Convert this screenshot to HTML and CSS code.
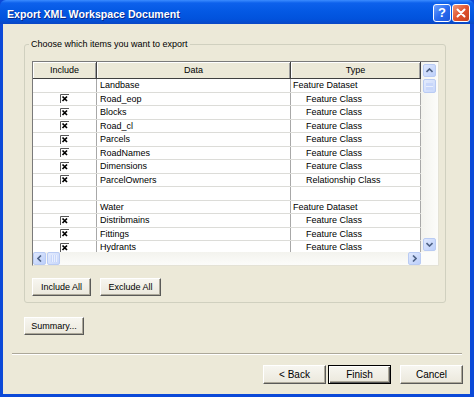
FILE: index.html
```html
<!DOCTYPE html>
<html lang="en">
<head>
  <meta charset="UTF-8">
  <title>Export XML Workspace Document</title>
  <link rel="stylesheet" href="styles.css">
</head>
<body>

<div class="dialog">
  <div class="titlebar">
    <span class="title">Export XML Workspace Document</span>
    <div class="caption-buttons">
      <span class="cap help">?</span>
      <span class="cap close">
        <svg width="10" height="10" viewBox="0 0 10 10"><path d="M1.5 1.5l7 7M8.5 1.5l-7 7" stroke="#fff" stroke-width="2" stroke-linecap="round"/></svg>
      </span>
    </div>
  </div>

  <div class="content">
    <fieldset class="group">
      <legend>Choose which items you want to export</legend>

      <div class="grid">
        <div class="list">
          <div class="row head">
            <div class="cell">Include</div>
            <div class="cell">Data</div>
            <div class="cell">Type</div>
          </div>
          <div class="rows">
            <div class="row"><div class="cell"></div><div class="cell">Landbase</div><div class="cell">Feature Dataset</div></div>
            <div class="row"><div class="cell"><svg class="check" width="9" height="9" viewBox="0 0 9 9"><path d="M0.5 9V0.5H9" stroke="#555" fill="none"/><path d="M2.5 2.5l4.5 4.5M7 2.5l-4.5 4.5" stroke="#000" stroke-width="1.7"/></svg></div><div class="cell">Road_eop</div><div class="cell sub">Feature Class</div></div>
            <div class="row"><div class="cell"><svg class="check" width="9" height="9" viewBox="0 0 9 9"><path d="M0.5 9V0.5H9" stroke="#555" fill="none"/><path d="M2.5 2.5l4.5 4.5M7 2.5l-4.5 4.5" stroke="#000" stroke-width="1.7"/></svg></div><div class="cell">Blocks</div><div class="cell sub">Feature Class</div></div>
            <div class="row"><div class="cell"><svg class="check" width="9" height="9" viewBox="0 0 9 9"><path d="M0.5 9V0.5H9" stroke="#555" fill="none"/><path d="M2.5 2.5l4.5 4.5M7 2.5l-4.5 4.5" stroke="#000" stroke-width="1.7"/></svg></div><div class="cell">Road_cl</div><div class="cell sub">Feature Class</div></div>
            <div class="row"><div class="cell"><svg class="check" width="9" height="9" viewBox="0 0 9 9"><path d="M0.5 9V0.5H9" stroke="#555" fill="none"/><path d="M2.5 2.5l4.5 4.5M7 2.5l-4.5 4.5" stroke="#000" stroke-width="1.7"/></svg></div><div class="cell">Parcels</div><div class="cell sub">Feature Class</div></div>
            <div class="row"><div class="cell"><svg class="check" width="9" height="9" viewBox="0 0 9 9"><path d="M0.5 9V0.5H9" stroke="#555" fill="none"/><path d="M2.5 2.5l4.5 4.5M7 2.5l-4.5 4.5" stroke="#000" stroke-width="1.7"/></svg></div><div class="cell">RoadNames</div><div class="cell sub">Feature Class</div></div>
            <div class="row"><div class="cell"><svg class="check" width="9" height="9" viewBox="0 0 9 9"><path d="M0.5 9V0.5H9" stroke="#555" fill="none"/><path d="M2.5 2.5l4.5 4.5M7 2.5l-4.5 4.5" stroke="#000" stroke-width="1.7"/></svg></div><div class="cell">Dimensions</div><div class="cell sub">Feature Class</div></div>
            <div class="row"><div class="cell"><svg class="check" width="9" height="9" viewBox="0 0 9 9"><path d="M0.5 9V0.5H9" stroke="#555" fill="none"/><path d="M2.5 2.5l4.5 4.5M7 2.5l-4.5 4.5" stroke="#000" stroke-width="1.7"/></svg></div><div class="cell">ParcelOwners</div><div class="cell sub">Relationship Class</div></div>
            <div class="row"><div class="cell"></div><div class="cell"></div><div class="cell"></div></div>
            <div class="row"><div class="cell"></div><div class="cell">Water</div><div class="cell">Feature Dataset</div></div>
            <div class="row"><div class="cell"><svg class="check" width="9" height="9" viewBox="0 0 9 9"><path d="M0.5 9V0.5H9" stroke="#555" fill="none"/><path d="M2.5 2.5l4.5 4.5M7 2.5l-4.5 4.5" stroke="#000" stroke-width="1.7"/></svg></div><div class="cell">Distribmains</div><div class="cell sub">Feature Class</div></div>
            <div class="row"><div class="cell"><svg class="check" width="9" height="9" viewBox="0 0 9 9"><path d="M0.5 9V0.5H9" stroke="#555" fill="none"/><path d="M2.5 2.5l4.5 4.5M7 2.5l-4.5 4.5" stroke="#000" stroke-width="1.7"/></svg></div><div class="cell">Fittings</div><div class="cell sub">Feature Class</div></div>
            <div class="row"><div class="cell"><svg class="check" width="9" height="9" viewBox="0 0 9 9"><path d="M0.5 9V0.5H9" stroke="#555" fill="none"/><path d="M2.5 2.5l4.5 4.5M7 2.5l-4.5 4.5" stroke="#000" stroke-width="1.7"/></svg></div><div class="cell">Hydrants</div><div class="cell sub">Feature Class</div></div>
          </div>
        </div>

        <!-- vertical scrollbar -->
        <div class="vscroll">
          <span class="sbtn"><svg width="7" height="5" viewBox="0 0 7 5"><path d="M0.5 4L3.5 1L6.5 4" stroke="#4d6185" stroke-width="1.6" fill="none"/></svg></span>
          <span class="thumb v"></span>
          <span class="track"></span>
          <span class="sbtn"><svg width="7" height="5" viewBox="0 0 7 5"><path d="M0.5 1L3.5 4L6.5 1" stroke="#4d6185" stroke-width="1.6" fill="none"/></svg></span>
        </div>

        <!-- horizontal scrollbar -->
        <div class="hscroll">
          <span class="sbtn"><svg width="5" height="7" viewBox="0 0 5 7"><path d="M4 0.5L1 3.5L4 6.5" stroke="#4d6185" stroke-width="1.6" fill="none"/></svg></span>
          <span class="thumb h"></span>
          <span class="track"></span>
          <span class="sbtn"><svg width="5" height="7" viewBox="0 0 5 7"><path d="M1 0.5L4 3.5L1 6.5" stroke="#4d6185" stroke-width="1.6" fill="none"/></svg></span>
        </div>
        <div class="corner"></div>
      </div>

      <div class="group-buttons">
        <button class="btn">Include All</button>
        <button class="btn wide">Exclude All</button>
      </div>
    </fieldset>

    <button class="btn summary">Summary...</button>

    <div class="separator"></div>

    <div class="footer">
      <button class="btn nav">&lt; Back</button>
      <button class="btn nav default">Finish</button>
      <button class="btn nav cancel">Cancel</button>
    </div>
  </div>
</div>

</body>
</html>
```

FILE: styles.css
```css
body {
  margin: 0;
  font-family: "Liberation Sans", Arial, sans-serif;
  font-size: 9px;
  color: #000;
  background: #0b49d8;
}

.dialog {
  width: 474px;
  height: 397px;
  box-sizing: border-box;
  background: #0b49d8;
  display: flex;
  flex-direction: column;
  padding: 0 4px 3px 3px;
}

/* title bar */
.titlebar {
  height: 24px;
  margin: 0 -4px 0 -3px;
  padding: 0 4px 0 7px;
  display: flex;
  align-items: center;
  justify-content: space-between;
  background: linear-gradient(#3b8cff 0, #0d61ec 3px, #0459e4 45%, #0152dc 80%, #0a47c4 100%);
  border-radius: 6px 6px 0 0;
}

.title {
  color: #fff;
  font-weight: bold;
  font-size: 10.6px;
  padding-top: 3px;
  text-shadow: 1px 1px 0 #0a2a8a;
}

.caption-buttons {
  display: flex;
  gap: 1px;
  padding-top: 1px;
}

.cap {
  width: 16px;
  height: 16px;
  border: 1px solid #fff;
  border-radius: 3px;
  display: flex;
  align-items: center;
  justify-content: center;
  color: #fff;
  font-weight: bold;
  font-size: 13px;
}

.help {
  background: linear-gradient(135deg, #6fa2ff, #2a6cf0 50%, #1d55d8);
}

.close {
  background: linear-gradient(135deg, #f09a7a, #e0532e 50%, #c8401c);
}

/* dialog body */
.content {
  flex: 1;
  background: #ece9d8;
  display: flex;
  flex-direction: column;
}

.group {
  margin: 14px 24px 0 21px;
  padding: 11px 6px 6px 7px;
  border: 1px solid #d0d0bf;
  border-radius: 3px;
}

.group legend {
  margin-left: -3px;
  padding: 0 2px;
  line-height: 12px;
}

/* list view */
.grid {
  width: 407px;
  height: 205px;
  box-sizing: border-box;
  border: 1px solid;
  border-color: #7a7a7a #e4e2d6 #e4e2d6 #7a7a7a;
  background: #fff;
  display: grid;
  grid-template-columns: 388px 17px;
  grid-template-rows: 190px 13px;
}

.list {
  overflow: hidden;
}

.row {
  display: grid;
  grid-template-columns: 64px 194px 130px;
  height: 13.5px;
  box-sizing: border-box;
  border-bottom: 1px solid #dcdcd8;
}

.cell {
  border-right: 1px solid #a8a8a8;
  padding-left: 2px;
  line-height: 12.5px;
  white-space: nowrap;
  overflow: hidden;
}

.row .cell:first-child {
  display: flex;
  align-items: center;
  justify-content: center;
  padding-left: 0;
}

.row .cell:nth-child(2) {
  padding-left: 3px;
}

.cell.sub {
  padding-left: 15px;
}

.head {
  height: 17px;
  border-bottom: 1px solid #404040;
  background: #ece9d8;
}

.head .cell,
.head .cell:nth-child(2) {
  padding-left: 0;
  text-align: center;
  line-height: 16px;
  border-right: 1px solid #404040;
  box-shadow: inset 1px 1px 0 #fff, inset -1px 0 0 #a0a0a0;
}

.check {
  display: block;
}

/* scrollbars */
.vscroll,
.hscroll {
  background: linear-gradient(90deg, #f3f3ee, #fcfcfa);
  display: flex;
  gap: 1px;
}

.vscroll {
  flex-direction: column;
  align-items: center;
  padding: 2px 0 1px;
}

.hscroll {
  align-items: center;
  padding-left: 0;
  background: linear-gradient(#f3f3ee, #fcfcfa);
}

.track {
  flex: 1;
}

.sbtn {
  width: 13px;
  height: 13px;
  box-sizing: border-box;
  border: 1px solid #b9cbf3;
  border-radius: 2px;
  background: linear-gradient(135deg, #dfe8fd, #bccffa);
  display: flex;
  align-items: center;
  justify-content: center;
}

.thumb {
  box-sizing: border-box;
  border: 1px solid #b9cbf3;
  border-radius: 2px;
  background: linear-gradient(135deg, #e3ebfd, #c8d7fb);
}

.thumb.v {
  width: 13px;
  height: 14px;
  margin-top: 1px;
  background: repeating-linear-gradient(#c8d7fb 0 3px, #e9effd 3px 4px) center / 7px 7px no-repeat,
    linear-gradient(135deg, #e3ebfd, #c8d7fb);
}

.thumb.h {
  width: 13px;
  height: 13px;
  background: repeating-linear-gradient(90deg, #c8d7fb 0 1px, #e9effd 1px 2px) center / 6px 7px no-repeat,
    linear-gradient(135deg, #e3ebfd, #c8d7fb);
}

.corner {
  background: #fcfcfa;
}

/* buttons */
.btn {
  font-family: "Liberation Sans", Arial, sans-serif;
  font-size: 9px;
  color: #000;
  height: 18px;
  padding: 0;
  box-sizing: border-box;
  border: 1px solid;
  border-color: #fff #5a5a58 #5a5a58 #fff;
  box-shadow: inset -1px -1px 0 #aca899;
  background: linear-gradient(#f7f6f0, #ebe8dc);
}

.group-buttons {
  display: flex;
  gap: 9px;
  margin-top: 12px;
}

.group-buttons .btn {
  width: 59px;
}

.group-buttons .btn.wide {
  width: 61px;
}

.summary {
  width: 60px;
  margin: 14px 0 0 21px;
}

.separator {
  margin: 18px 8px 0 9px;
  border-top: 1px solid #aca899;
  border-bottom: 1px solid #fff;
}

.footer {
  display: flex;
  justify-content: flex-end;
  gap: 2px;
  margin-top: 10px;
  padding-right: 7px;
}

.nav {
  width: 63px;
  height: 19px;
  font-size: 10px;
}

.nav.default {
  border: 1px solid #000;
  box-shadow: inset 1px 1px 0 #fff, inset -1px -1px 0 #5a5a58, inset -2px -2px 0 #aca899;
}

.nav.cancel {
  margin-left: 7px;
}
```
